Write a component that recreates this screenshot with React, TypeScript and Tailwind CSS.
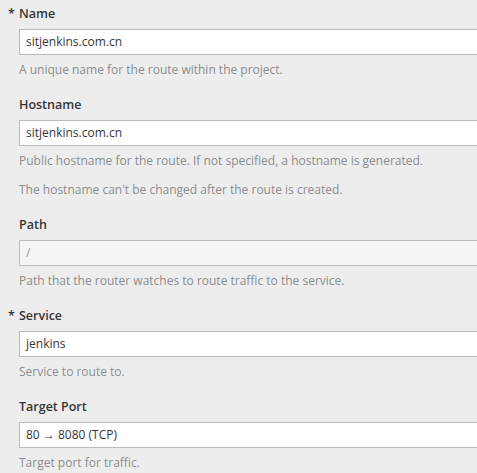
import React from "react";

type Field = {
  label: string;
  required?: boolean;
  value: string;
  readOnly?: boolean;
  help: string[];
};

const fields: Field[] = [
  { label: "Name", required: true, value: "sitjenkins.com.cn", help: ["A unique name for the route within the project."] },
  {
    label: "Hostname",
    value: "sitjenkins.com.cn",
    help: [
      "Public hostname for the route. If not specified, a hostname is generated.",
      "The hostname can't be changed after the route is created.",
    ],
  },
  { label: "Path", value: "/", readOnly: true, help: ["Path that the router watches to route traffic to the service."] },
  { label: "Service", required: true, value: "jenkins", help: ["Service to route to."] },
  { label: "Target Port", value: "80 → 8080 (TCP)", help: ["Target port for traffic."] },
];

export default function App() {
  return (
    <div
      className="w-[477px] h-[473px] overflow-hidden bg-[#ededed] pl-[19px] pt-[4px] text-[12px] text-[#363636]"
      style={{ fontFamily: '"Open Sans", "Liberation Sans", sans-serif' }}
    >
      {fields.map((f) => (
        <div key={f.label} className="mb-[15px]">
          <label className="block text-[12.5px] font-semibold leading-[20px] mb-[5px]">
            {f.required && <span className="inline-block w-[11px] -ml-[11px]">*</span>}
            {f.label}
          </label>
          <div
            className={
              "w-[480px] h-[26px] border border-[#bbbbbb] flex items-center px-[6px] " +
              (f.readOnly ? "bg-[#f5f5f5] text-[#999999]" : "bg-white")
            }
          >
            {f.value}
          </div>
          {f.help.map((h, i) => (
            <p key={i} className={"leading-[20px] text-[#8b8d8f] " + (i === 0 ? "mt-[5px]" : "mt-[9px]")}>
              {h}
            </p>
          ))}
        </div>
      ))}
    </div>
  );
}
